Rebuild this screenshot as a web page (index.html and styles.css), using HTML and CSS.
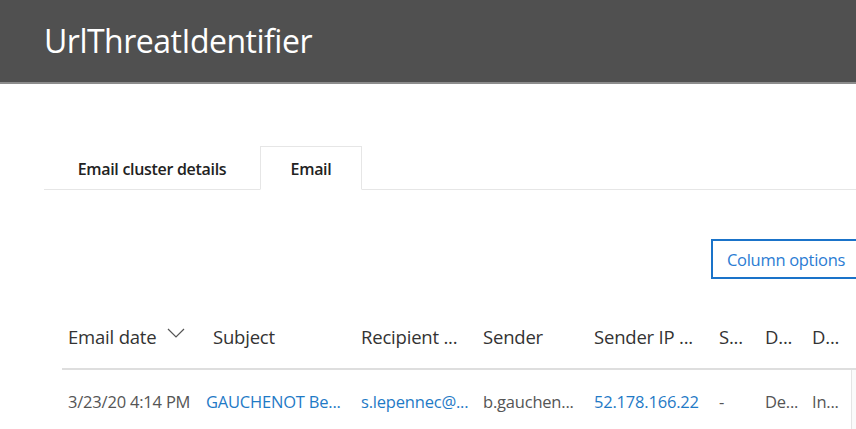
FILE: index.html
```html
<!DOCTYPE html>
<html lang="en">
<head>
  <meta charset="UTF-8">
  <title>UrlThreatIdentifier</title>
  <link rel="stylesheet" href="styles.css">
</head>
<body>
  <header class="topbar">
    <h1>UrlThreatIdentifier</h1>
  </header>

  <div class="tabs">
    <div class="tab">Email cluster details</div>
    <div class="tab active">Email</div>
  </div>

  <div class="toolbar">
    <button class="column-options">Column options</button>
  </div>

  <div class="grid">
    <div class="grid-head">
      <div class="cell">Email date
        <svg class="sort" width="18" height="10" viewBox="0 0 18 10"><path d="M1 1 L9 9 L17 1" fill="none" stroke="#555" stroke-width="1.2"/></svg>
      </div>
      <div class="cell subject-head">Subject</div>
      <div class="cell">Recipient ...</div>
      <div class="cell">Sender</div>
      <div class="cell">Sender IP ...</div>
      <div class="cell">S...</div>
      <div class="cell">D...</div>
      <div class="cell">D...</div>
    </div>
    <div class="grid-body">
      <div class="grid-row">
        <div class="cell">3/23/20 4:14 PM</div>
        <div class="cell link">GAUCHENOT Be...</div>
        <div class="cell link">s.lepennec@...</div>
        <div class="cell">b.gauchen...</div>
        <div class="cell link">52.178.166.22</div>
        <div class="cell">-</div>
        <div class="cell">De...</div>
        <div class="cell">In...</div>
      </div>
      <div class="scroll-track"></div>
    </div>
  </div>
</body>
</html>
```

FILE: styles.css
```css
html, body {
  margin: 0;
  padding: 0;
  overflow: hidden;
}
body {
  font-family: "Open Sans", "Noto Sans", sans-serif;
  background-color: white;
  color: #333;
  width: 856px;
}
.topbar {
  background-color: #505050;
  border-bottom: 2px solid #8c8c8c;
  display: flex;
  align-items: center;
  padding-left: 44px;
  box-sizing: border-box;
  height: 84px;
}
.topbar h1 {
  margin: 0 0 2px 0;
  color: white;
  font-weight: 400;
  font-size: 32px;
  letter-spacing: -0.5px;
}
.tabs {
  display: flex;
  margin: 62px 0 0 44px;
  border-bottom: 1px solid #e6e6e6;
  height: 43px;
}
.tab {
  width: 216px;
  text-align: center;
  font-size: 16px;
  font-weight: 600;
  color: #222;
  line-height: 46px;
  letter-spacing: -0.3px;
}
.tab.active {
  width: 100px;
  border: 1px solid #e6e6e6;
  border-bottom: 1px solid white;
  margin-bottom: -1px;
  background-color: white;
  line-height: 44px;
}
.toolbar {
  display: flex;
  justify-content: flex-end;
  margin-top: 49px;
  margin-right: -20px;
}
.column-options {
  font-family: "Open Sans", "Noto Sans", sans-serif;
  font-size: 16.5px;
  color: #2b7cd3;
  background-color: white;
  border: 2px solid #1a73c9;
  height: 40px;
  width: 165px;
  text-align: left;
  padding: 0 0 0 14px;
  letter-spacing: -0.3px;
}
.grid {
  margin-top: 42px;
  margin-left: 62px;
}
.grid-head, .grid-row {
  display: grid;
  grid-template-columns: 138px 155px 122px 111px 125px 46px 47px 45px;
}
.grid-head {
  border-bottom: 2px solid #dedede;
  height: 47px;
  align-items: start;
}
.grid-head .cell {
  font-size: 18.5px;
  color: #333;
  padding: 3px 0 0 6px;
  letter-spacing: -0.2px;
  display: flex;
  align-items: center;
  white-space: nowrap;
}
.grid-head .subject-head {
  padding-left: 13px;
}
.sort {
  margin-left: 11px;
  margin-top: -8px;
}
.grid-body {
  display: flex;
}
.grid-row {
  height: 62px;
  align-items: center;
  width: 789px;
}
.grid-row .cell {
  font-size: 16.5px;
  color: #555;
  padding-left: 6px;
  white-space: nowrap;
  letter-spacing: -0.2px;
}
.grid-row .cell.link {
  color: #1f7ac6;
}
.scroll-track {
  flex: 1;
  border-left: 1px solid #e4e4e4;
  background-color: #fafafa;
}
```
